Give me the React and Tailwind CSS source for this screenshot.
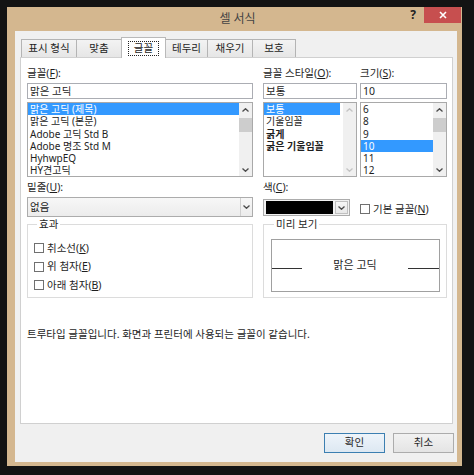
import clsx from "clsx";

const Chevron = ({ dir = "down", color = "#4d4d4d" }) => (
  <svg width="7" height="4" viewBox="0 0 7 4">
    <polyline
      points={dir === "up" ? "0.5,3.5 3.5,0.7 6.5,3.5" : "0.5,0.5 3.5,3.3 6.5,0.5"}
      fill="none"
      stroke={color}
      strokeWidth="1.3"
    />
  </svg>
);

const ScrollBar = ({ disabled }) => (
  <div className="w-[13px] h-full bg-[#f0f0f0] flex flex-col">
    <div className="h-[13px] flex items-center justify-center">
      <Chevron dir="up" color={disabled ? "#c4c4c4" : "#4d4d4d"} />
    </div>
    {!disabled && <div className="mt-[2px] h-[14px] bg-[#cdcdcd]" />}
    <div className="flex-1" />
    <div className="h-[13px] flex items-center justify-center">
      <Chevron color={disabled ? "#c4c4c4" : "#4d4d4d"} />
    </div>
  </div>
);

const ListBox = ({ items, selected, disabledScroll, hlGap }) => (
  <div className="mt-[3px] h-[75px] border border-[#a9a9a9] bg-white flex">
    <div className={clsx("flex-1 overflow-hidden", hlGap && "pr-[3px]")}>
      {items.map((it, i) => (
        <div
          key={i}
          className={clsx(
            "h-[12.3px] leading-[12.3px] text-[10px] pl-[2px] whitespace-nowrap",
            i === selected && "bg-[#3399ff] text-white",
            it.cls
          )}
        >
          {it.label}
        </div>
      ))}
    </div>
    <ScrollBar disabled={disabledScroll} />
  </div>
);

const Label = ({ text, k, className }) => (
  <div className={clsx("h-[13px] leading-[13px] whitespace-nowrap", className)}>
    {text}(<u>{k}</u>):
  </div>
);

const TextInput = ({ value }) => (
  <div className="mt-[3px] h-[16px] border border-[#abadb3] bg-white pl-[2px] leading-[14px]">
    {value}
  </div>
);

const CheckBox = () => (
  <div className="w-[10px] h-[10px] border border-[#707070] bg-white shrink-0" />
);

const Tab = ({ label, w, active, first }) => (
  <div
    className={clsx(
      "border border-b-0 flex items-center justify-center shrink-0",
      !first && "-ml-px",
      active
        ? "h-[21px] -mb-px bg-white border-[#b9b9b9] relative z-10"
        : "h-[18px] bg-linear-to-b from-[#f3f3f3] to-[#e6e6e6] border-[#b4b4b4]"
    )}
    style={{ width: w }}
  >
    {active ? (
      <span className="border border-dotted border-[#222] px-[5px] leading-[13px] mt-[1px]">{label}</span>
    ) : (
      label
    )}
  </div>
);

export default function App() {
  const fonts = [
    { label: "맑은 고딕 (제목)" },
    { label: "맑은 고딕 (본문)" },
    { label: "Adobe 고딕 Std B" },
    { label: "Adobe 명조 Std M" },
    { label: "HyhwpEQ" },
    { label: "HY견고딕" },
  ];
  const styles = [
    { label: "보통" },
    { label: "기울임꼴" },
    { label: "굵게", cls: "font-bold" },
    { label: "굵은 기울임꼴", cls: "font-semibold" },
  ];
  const sizes = ["6", "8", "9", "10", "11", "12"].map((s) => ({ label: s }));

  return (
    <div className="w-[474px] h-[475px] bg-[#131313] pt-[7px] pl-[7px] overflow-hidden font-['Noto_Sans','Noto_Sans_CJK_KR',sans-serif] text-[10.5px] text-[#1e1e1e]">
      <div className="w-[455px] h-[459px] bg-[#d4b78f] flex flex-col">
        {/* title bar */}
        <div className="h-[24px] flex shrink-0">
          <div className="w-[70px]" />
          <div className="flex-1 text-center text-[12px] leading-[24px] text-[#444] pl-[6px]">셀 서식</div>
          <div className="w-[70px] flex items-start justify-end">
            <div className="text-[12px] font-bold leading-[16px] text-[#222] mr-[8px]">?</div>
            <div className="w-[37px] h-[16px] bg-[#c74f4f] mr-[1px] flex items-center justify-center">
              <svg width="8" height="8" viewBox="0 0 8 8">
                <path d="M1 1 L7 7 M7 1 L1 7" stroke="#fff" strokeWidth="1.6" />
              </svg>
            </div>
          </div>
        </div>

        {/* client area */}
        <div className="flex-1 ml-[8px] mr-[5px] mb-[4px] bg-[#f0f0f0] flex flex-col pt-[6px] pl-[5px] pr-[4px]">
          {/* tabs */}
          <div className="h-[20px] flex items-end pl-[1px]">
            <Tab label="표시 형식" w={56} first />
            <Tab label="맞춤" w={46} />
            <Tab label="글꼴" w={45} active />
            <Tab label="테두리" w={43} />
            <Tab label="채우기" w={46} />
            <Tab label="보호" w={44} />
          </div>

          {/* panel */}
          <div className="h-[367px] bg-white border border-[#d0d0d0] pl-[6px] pt-[9px]">
            <div className="flex">
              <div className="w-[226px]">
                <Label text="글꼴" k="F" />
                <TextInput value="맑은 고딕" />
                <ListBox items={fonts} selected={0} />
              </div>
              <div className="w-[94px] ml-[10px]">
                <Label text="글꼴 스타일" k="O" />
                <TextInput value="보통" />
                <ListBox items={styles} selected={0} disabledScroll hlGap />
              </div>
              <div className="w-[87px] ml-[3px]">
                <Label text="크기" k="S" />
                <TextInput value="10" />
                <ListBox items={sizes} selected={3} />
              </div>
            </div>

            <div className="flex mt-[4px]">
              <div className="w-[226px]">
                <Label text="밑줄" k="U" />
                <div className="mt-[3px] h-[20px] border border-[#acacac] bg-linear-to-b from-[#f7f7f7] to-[#ececec] flex">
                  <div className="flex-1 pl-[2px] leading-[18px]">없음</div>
                  <div className="w-[12px] border-l border-[#d0d0d0] flex items-center justify-center">
                    <Chevron />
                  </div>
                </div>
              </div>
              <div className="w-[94px] ml-[10px]">
                <Label text="색" k="C" />
                <div className="mt-[5px] w-[87px] h-[17px] border border-[#acacac] bg-[#f2f2f2] flex items-center pl-[2px] pr-[1px]">
                  <div className="w-[69px] h-[13px] bg-black" />
                  <div className="ml-[2px] w-[13px] h-[13px] border border-[#c0c0c0] bg-linear-to-b from-[#f7f7f7] to-[#e8e8e8] flex items-center justify-center">
                    <Chevron />
                  </div>
                </div>
              </div>
              <div className="w-[87px] ml-[3px] pt-[20px] flex items-center">
                <CheckBox />
                <div className="ml-[3px] leading-[13px] whitespace-nowrap">
                  기본 글꼴(<u>N</u>)
                </div>
              </div>
            </div>

            <div className="flex mt-[1px]">
              <fieldset className="w-[226px] h-[80px] border border-[#dcdcdc] pl-[6px] pt-[8px]">
                <legend className="ml-[3px] px-[2px] leading-[13px]">효과</legend>
                {[
                  ["취소선", "K"],
                  ["위 첨자", "E"],
                  ["아래 첨자", "B"],
                ].map(([t, k]) => (
                  <div key={k} className="h-[18.5px] flex items-center">
                    <CheckBox />
                    <div className="ml-[3px] leading-[13px]">
                      {t}(<u>{k}</u>)
                    </div>
                  </div>
                ))}
              </fieldset>
              <fieldset className="w-[184px] h-[80px] ml-[10px] border border-[#dcdcdc] pl-[7px] pr-[6px] pt-[8px]">
                <legend className="ml-[3px] px-[2px] leading-[13px]">미리 보기</legend>
                <div className="h-[53px] border border-[#a0a0a0] flex items-center">
                  <div className="w-[30px] h-px bg-[#333] mt-[6px]" />
                  <div className="flex-1 text-center text-[11px] leading-[13px] -mt-[2px]">맑은 고딕</div>
                  <div className="w-[31px] h-px bg-[#333] mt-[6px]" />
                </div>
              </fieldset>
            </div>

            <div className="mt-[30px] leading-[13px]">
              트루타입 글꼴입니다. 화면과 프린터에 사용되는 글꼴이 같습니다.
            </div>
          </div>

          {/* buttons */}
          <div className="mt-[9px] flex justify-end gap-[8px] -mr-[1px]">
            <div className="w-[61px] h-[20px] border border-[#3c7fb1] bg-linear-to-b from-[#eef4fa] to-[#dde8f2] flex items-center justify-center">
              확인
            </div>
            <div className="w-[61px] h-[20px] border border-[#acacac] bg-linear-to-b from-[#f2f2f2] to-[#e4e4e4] flex items-center justify-center">
              취소
            </div>
          </div>
        </div>
      </div>
    </div>
  );
}
